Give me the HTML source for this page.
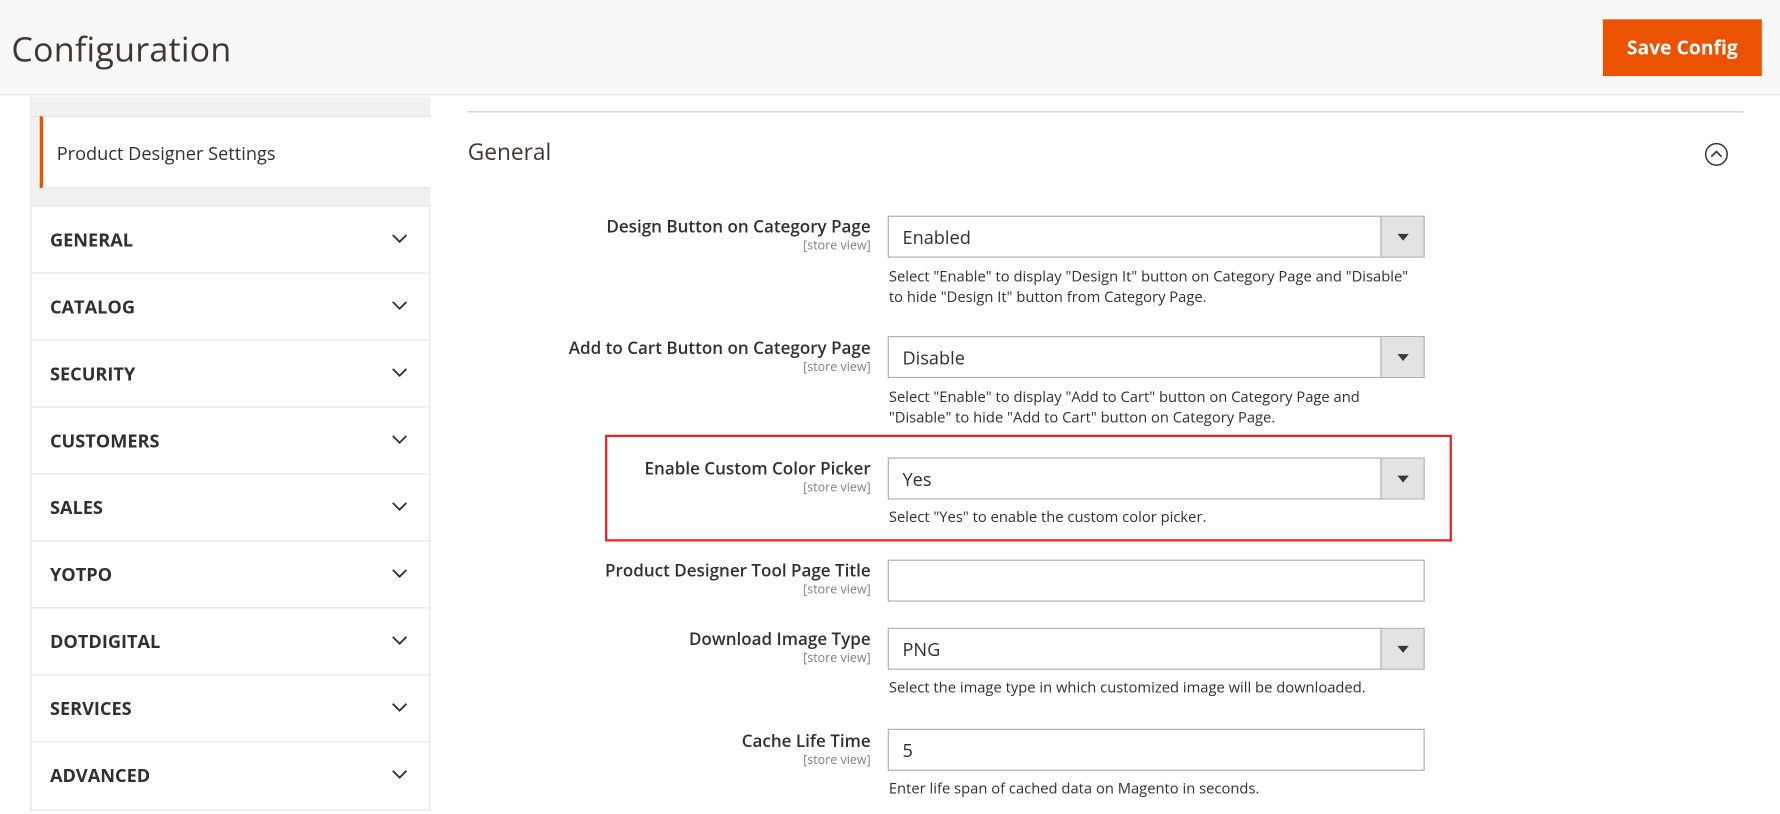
<!DOCTYPE html>
<html><head><style>
*{box-sizing:border-box;margin:0;padding:0}
html,body{width:1780px;height:814px;overflow:hidden;background:#fff}
#w{position:absolute;left:0;top:0;width:1568px;height:717px;transform:scale(1.13520);transform-origin:0 0;font-family:"Open Sans","Liberation Sans",sans-serif;color:#303030}
.hdr{position:absolute;left:0;top:0;width:1568px;height:84px;background:#f8f8f8;border-bottom:1px solid #e3e3e3}
.hdr h1{position:absolute;left:10px;top:22px;font-size:30px;font-weight:400;color:#41362f;letter-spacing:0.2px}
.save{position:absolute;left:1412px;top:17px;width:140px;height:50px;background:#eb5202;color:#fff;font-size:17px;font-weight:700;text-align:center;line-height:50px}
.side{position:absolute;left:27px;top:85px;width:352px;height:629px;border-left:1px solid #e3e3e3;border-right:1px solid #e3e3e3;border-bottom:1px solid #e3e3e3}
.grey{position:absolute;left:0;top:0;width:351px;height:96px;background:#f1f1f1}
.grey .t{position:absolute;left:0;top:17px;width:351px;height:1px;background:#e3e3e3}
.pds{position:absolute;left:7px;top:17px;width:344px;height:64px;background:#fff;border-left:3px solid #eb5202;border-top:1px solid #e3e3e3;border-bottom:1px solid #e3e3e3;font-size:16px;padding:21px 0 0 12px;color:#303030}
.it{position:absolute;left:0;width:351px;height:59px;border-top:1px solid #e3e3e3;font-size:16px;font-weight:700;padding:18px 0 0 16px;color:#303030}
.it svg{position:absolute;right:20px;top:24px}
.sep{position:absolute;left:411px;top:98px;width:1125px;height:1px;background:#ccc}
.gen{position:absolute;left:412px;top:120px;font-size:20px;color:#41362f}
.circ{position:absolute;left:1501px;top:125px}
.lbl{position:absolute;right:801px;text-align:right;font-size:15px;font-weight:600;color:#303030;white-space:nowrap}
.lbl small{display:block;font-size:11px;font-weight:400;color:#808080;margin-top:-1px}
.sel{position:absolute;left:782px;width:473px;height:37px;border:1px solid #adadad;font-size:16px;padding:7px 12px;color:#303030;background:#fff}
.sel .a{position:absolute;right:0;top:0;width:38px;height:35px;background:#e3e3e3;border-left:1px solid #adadad}
.sel .a:after{content:"";position:absolute;left:14px;top:15px;border-left:5px solid transparent;border-right:5px solid transparent;border-top:6px solid #41362f}
.note{position:absolute;left:783px;font-size:13px;color:#303030;line-height:18px;width:480px}
.red{position:absolute;left:533px;top:383px;width:746px;height:94px;border:2px solid #e22626}
</style></head><body><div id="w">
<div class="hdr"><h1>Configuration</h1><div class="save">Save Config</div></div>
<div class="side">
<div class="grey"><div class="t"></div></div>
<div class="pds">Product Designer Settings</div>
<div class="it" style="top:96px">GENERAL<svg width="14" height="9" viewBox="0 0 14 9"><path d="M1 1l6 6 6-6" fill="none" stroke="#303030" stroke-width="1.6"/></svg></div>
<div class="it" style="top:155px">CATALOG<svg width="14" height="9" viewBox="0 0 14 9"><path d="M1 1l6 6 6-6" fill="none" stroke="#303030" stroke-width="1.6"/></svg></div>
<div class="it" style="top:214px">SECURITY<svg width="14" height="9" viewBox="0 0 14 9"><path d="M1 1l6 6 6-6" fill="none" stroke="#303030" stroke-width="1.6"/></svg></div>
<div class="it" style="top:273px">CUSTOMERS<svg width="14" height="9" viewBox="0 0 14 9"><path d="M1 1l6 6 6-6" fill="none" stroke="#303030" stroke-width="1.6"/></svg></div>
<div class="it" style="top:332px">SALES<svg width="14" height="9" viewBox="0 0 14 9"><path d="M1 1l6 6 6-6" fill="none" stroke="#303030" stroke-width="1.6"/></svg></div>
<div class="it" style="top:391px">YOTPO<svg width="14" height="9" viewBox="0 0 14 9"><path d="M1 1l6 6 6-6" fill="none" stroke="#303030" stroke-width="1.6"/></svg></div>
<div class="it" style="top:450px">DOTDIGITAL<svg width="14" height="9" viewBox="0 0 14 9"><path d="M1 1l6 6 6-6" fill="none" stroke="#303030" stroke-width="1.6"/></svg></div>
<div class="it" style="top:509px">SERVICES<svg width="14" height="9" viewBox="0 0 14 9"><path d="M1 1l6 6 6-6" fill="none" stroke="#303030" stroke-width="1.6"/></svg></div>
<div class="it" style="top:568px">ADVANCED<svg width="14" height="9" viewBox="0 0 14 9"><path d="M1 1l6 6 6-6" fill="none" stroke="#303030" stroke-width="1.6"/></svg></div>
</div>
<div class="sep"></div>
<div class="gen">General</div>
<svg class="circ" width="22" height="22" viewBox="0 0 22 22"><circle cx="11" cy="11" r="9.5" fill="none" stroke="#303030" stroke-width="1.3"/><path d="M6.5 13l4.5-4.5 4.5 4.5" fill="none" stroke="#303030" stroke-width="1.4"/></svg>

<div class="lbl" style="top:190px">Design Button on Category Page<small>[store view]</small></div>
<div class="sel" style="top:190px">Enabled<div class="a"></div></div>
<div class="note" style="top:234px">Select "Enable" to display "Design It" button on Category Page and "Disable"<br>to hide "Design It" button from Category Page.</div>

<div class="lbl" style="top:297px">Add to Cart Button on Category Page<small>[store view]</small></div>
<div class="sel" style="top:296px">Disable<div class="a"></div></div>
<div class="note" style="top:340px">Select "Enable" to display "Add to Cart" button on Category Page and<br>"Disable" to hide "Add to Cart" button on Category Page.</div>

<div class="red"></div>
<div class="lbl" style="top:403px">Enable Custom Color Picker<small>[store view]</small></div>
<div class="sel" style="top:403px">Yes<div class="a"></div></div>
<div class="note" style="top:446px">Select "Yes" to enable the custom color picker.</div>

<div class="lbl" style="top:493px">Product Designer Tool Page Title<small>[store view]</small></div>
<div class="sel" style="top:493px"></div>

<div class="lbl" style="top:553px">Download Image Type<small>[store view]</small></div>
<div class="sel" style="top:553px">PNG<div class="a"></div></div>
<div class="note" style="top:596px">Select the image type in which customized image will be downloaded.</div>

<div class="lbl" style="top:643px">Cache Life Time<small>[store view]</small></div>
<div class="sel" style="top:642px">5</div>
<div class="note" style="top:685px">Enter life span of cached data on Magento in seconds.</div>
</div></body></html>
